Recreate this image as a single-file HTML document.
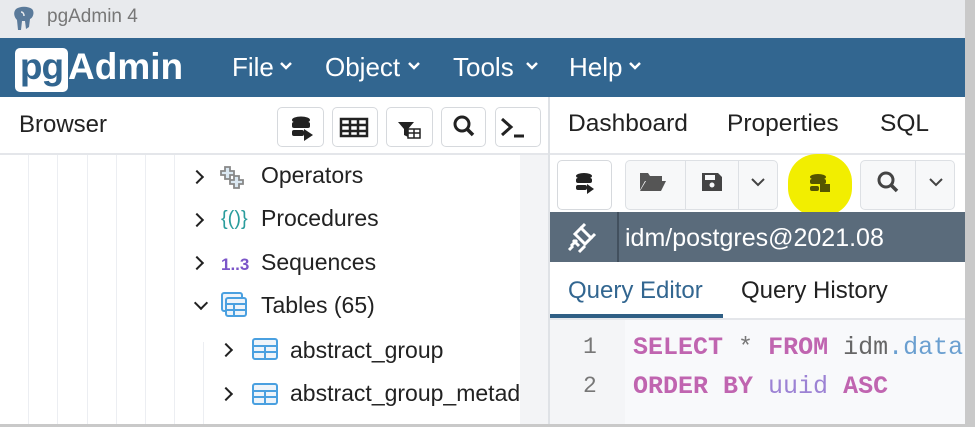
<!DOCTYPE html>
<html><head><style>
*{box-sizing:border-box;margin:0;padding:0}
body{width:975px;height:427px;overflow:hidden;position:relative;background:#fff;font-family:"Liberation Sans",sans-serif;color:#222}
.a{position:absolute}
.btn{position:absolute;border:1px solid #d6d9dd;border-radius:5px;background:#fff}
.tb{position:absolute;border:1px solid #dde0e4;border-radius:5px;background:#f7f8f9}
.vl{position:absolute;top:155px;width:1px;height:270px;background:#eceef2}
.chev{position:absolute;width:10px;height:10px;border-right:2.5px solid #222;border-bottom:2.5px solid #222}
.t{position:absolute;font-size:23px}
</style></head><body>
<div class="a" style="left:0;top:0;width:975px;height:38px;background:#e8eaed"></div>
<svg class="a" style="left:12px;top:6px" width="24" height="26" viewBox="0 0 24 26"><path d="M4 3c4-3 12-3 16 0 3 3 1 9-2 10l-1 8-3 2-1-8-3 0-1 9-3 0-1-10C2 11 1 6 4 3z" fill="#5a7a9a"/><path d="M9 6c2 0 3 2 3 4" stroke="#e8eaed" stroke-width="1.5" fill="none"/></svg>
<div class="a" style="left:47px;top:6px;font-size:19px;color:#777">pgAdmin 4</div>
<div class="a" style="left:0;top:38px;width:965px;height:59px;background:#326690"></div>
<div class="a" style="left:965px;top:0;width:10px;height:427px;background:#c9c9c9"></div>
<div class="a" style="left:15px;top:48px;width:53px;height:44px;background:#fff;border-radius:5px"></div>
<div class="a" style="left:14px;top:46px;font-size:37px;font-weight:bold;color:#326690;letter-spacing:-1px;width:55px;text-align:center">pg</div>
<div class="a" style="left:68px;top:46px;font-size:37px;font-weight:bold;color:#fff">Admin</div>
<div class="a" style="left:232px;top:52px;font-size:26px;color:#fff">File</div>
<div class="a" style="left:325px;top:52px;font-size:26px;color:#fff">Object</div>
<div class="a" style="left:453px;top:52px;font-size:26px;color:#fff">Tools</div>
<div class="a" style="left:569px;top:52px;font-size:26px;color:#fff">Help</div>
<svg class="a" style="left:0;top:38px" width="965" height="59"><g stroke="#fff" stroke-width="2.5" fill="none"><path d="M281 25l5 5 5-5"/><path d="M409 25l5 5 5-5"/><path d="M527 25l5 5 5-5"/><path d="M630 25l5 5 5-5"/></g></svg>
<!-- Browser header -->
<div class="t" style="left:19px;top:111px;font-size:24px">Browser</div>
<div class="a" style="left:0;top:153px;width:550px;height:2px;background:#e4e6ea"></div>
<div class="btn" style="left:277px;top:107px;width:47px;height:40px"></div>
<div class="btn" style="left:332px;top:107px;width:46px;height:40px"></div>
<div class="btn" style="left:386px;top:107px;width:47px;height:40px"></div>
<div class="btn" style="left:441px;top:107px;width:45px;height:40px"></div>
<div class="btn" style="left:495px;top:107px;width:46px;height:40px"></div>
<svg class="a" style="left:277px;top:107px" width="270" height="40">
<g fill="#222"><ellipse cx="24" cy="13" rx="9" ry="3.5"/><rect x="15" y="15" width="18" height="6" rx="2"/><rect x="15" y="23" width="12" height="6" rx="2"/><path d="M27 22l9 6-9 6z"/></g>
<g stroke="#222" stroke-width="2.5" fill="none"><rect x="64" y="12" width="26" height="17"/><path d="M64 18h26M64 24h26M73 12v17M81 12v17"/></g>
<path d="M121 15h16l-6 7v8l-4-2v-6z" fill="#222"/><g stroke="#222" stroke-width="1.5" fill="none"><rect x="131" y="22" width="12" height="9"/><path d="M131 26h12M137 22v9"/></g>
<circle cx="185" cy="17" r="7" stroke="#222" stroke-width="3" fill="none"/><path d="M190 22l6 6" stroke="#222" stroke-width="3.5"/>
<path d="M225 12l9 8-9 8" stroke="#222" stroke-width="3" fill="none"/><path d="M237 29h10" stroke="#222" stroke-width="3"/>
</svg>
<!-- tree -->
<div class="vl" style="left:28px"></div><div class="vl" style="left:57px"></div><div class="vl" style="left:87px"></div><div class="vl" style="left:116px"></div><div class="vl" style="left:145px"></div><div class="vl" style="left:174px"></div><div class="vl" style="left:203px;top:342px;height:85px"></div>
<div class="a" style="left:520px;top:155px;width:28px;height:272px;background:#f3f4f6"></div>
<div class="a" style="left:548px;top:97px;width:2px;height:330px;background:#dfe2e6"></div>
<div class="chev" style="left:192px;top:172px;transform:rotate(-45deg)"></div>
<div class="chev" style="left:192px;top:215px;transform:rotate(-45deg)"></div>
<div class="chev" style="left:192px;top:258px;transform:rotate(-45deg)"></div>
<div class="chev" style="left:196px;top:298px;transform:rotate(45deg)"></div>
<div class="chev" style="left:221px;top:345px;transform:rotate(-45deg)"></div>
<div class="chev" style="left:221px;top:389px;transform:rotate(-45deg)"></div>
<svg class="a" style="left:220px;top:163px" width="70" height="260">
<g stroke="#888" stroke-width="1.8" fill="#dbe8f2"><path d="M5 4h5v4h4v4h-4v4H5v-4H1V8h4z"/><path d="M14 13h5v4h4v4h-4v4h-5v-4h-4v-4h4z"/></g>
<text x="1" y="62" font-size="20" fill="#2a9d9d" font-family="Liberation Sans">{()}</text>
<text x="1" y="107" font-size="17" font-weight="bold" fill="#7b55c8" font-family="Liberation Sans">1..3</text>
<g stroke="#4aa0e0" stroke-width="2" fill="#eef4fa"><rect x="2" y="130" width="20" height="18" rx="2"/><rect x="6" y="135" width="20" height="18" rx="2"/><path d="M6 141h20M6 147h20M14 141v12"/></g>
<g stroke="#4aa0e0" stroke-width="2" fill="#eef4fa"><rect x="33" y="176" width="24" height="20" rx="2"/><path d="M33 183h24M33 189h24M45 183v13"/><rect x="33" y="221" width="24" height="20" rx="2"/><path d="M33 228h24M33 234h24M45 228v13"/></g>
</svg>
<div class="t" style="left:261px;top:162px">Operators</div>
<div class="t" style="left:261px;top:205px">Procedures</div>
<div class="t" style="left:261px;top:249px">Sequences</div>
<div class="t" style="left:261px;top:292px">Tables (65)</div>
<div class="t" style="left:290px;top:337px">abstract_group</div>
<div class="t" style="left:290px;top:380px;width:230px;overflow:hidden;white-space:nowrap">abstract_group_metadata</div>
<!-- right panel -->
<div class="t" style="left:568px;top:110px;font-size:24.5px">Dashboard</div>
<div class="t" style="left:727px;top:110px;font-size:24.5px">Properties</div>
<div class="t" style="left:880px;top:110px;font-size:24.5px">SQL</div>
<div class="a" style="left:550px;top:153px;width:415px;height:2px;background:#e4e6ea"></div>
<div class="btn" style="left:557px;top:160px;width:55px;height:50px"></div>
<div class="tb" style="left:625px;top:160px;width:153px;height:50px"></div>
<div class="a" style="left:685px;top:160px;width:1px;height:50px;background:#dde0e4"></div>
<div class="a" style="left:738px;top:160px;width:1px;height:50px;background:#dde0e4"></div>
<div class="tb" style="left:860px;top:160px;width:95px;height:50px"></div>
<div class="a" style="left:915px;top:160px;width:1px;height:50px;background:#dde0e4"></div>
<div class="a" style="left:788px;top:154px;width:64px;height:62px;background:#f2ee00;border-radius:45%"></div>
<svg class="a" style="left:550px;top:155px" width="415" height="57">
<g fill="#222"><ellipse cx="34" cy="21" rx="8" ry="3"/><rect x="26" y="23" width="16" height="5" rx="2"/><rect x="26" y="30" width="11" height="5" rx="2"/><path d="M37 29l7 5-7 5z"/></g>
<path d="M90 18h8l2 3h12v5H95l-5 9z" fill="#555"/><path d="M96 26h20l-5 10H90z" fill="#555"/>
<path d="M152 18h16l4 4v14h-20z" fill="#444"/><rect x="155" y="20" width="10" height="5" fill="#f7f8f9"/><circle cx="162" cy="30" r="2.5" fill="#f7f8f9"/>
<path d="M202 24l6 6 6-6" stroke="#444" stroke-width="2" fill="none"/>
<g fill="#555500"><ellipse cx="268" cy="22" rx="8" ry="3"/><rect x="260" y="24" width="16" height="5" rx="2"/><rect x="260" y="31" width="9" height="5" rx="2"/><rect x="270" y="29" width="10" height="8"/></g>
<circle cx="336" cy="25" r="7" stroke="#444" stroke-width="3" fill="none"/><path d="M341 30l6 6" stroke="#444" stroke-width="3.5"/>
<path d="M380 24l6 6 6-6" stroke="#444" stroke-width="2" fill="none"/>
</svg>
<div class="a" style="left:550px;top:212px;width:415px;height:50px;background:#5a6b7b"></div>
<div class="a" style="left:617px;top:212px;width:2px;height:50px;background:#42505e"></div>
<svg class="a" style="left:565px;top:222px" width="36" height="32"><g stroke="#fff" stroke-width="3" fill="none"><path d="M10 12l6-6 10 10-6 6z"/><path d="M16 6l4-4M26 16l4-4M6 24l6-6M14 30l6-6"/><path d="M8 18l6 6"/><path d="M4 28l4-4"/></g></svg>
<div class="a" style="left:625px;top:224px;font-size:25px;color:#fff">idm/postgres@2021.08</div>
<div class="t" style="left:568px;top:277px;font-size:24px;color:#326690">Query Editor</div>
<div class="t" style="left:741px;top:277px;font-size:24px">Query History</div>
<div class="a" style="left:550px;top:314px;width:173px;height:4px;background:#2f5f85"></div>
<div class="a" style="left:550px;top:318px;width:415px;height:2px;background:#e4e6ea"></div>
<div class="a" style="left:550px;top:320px;width:415px;height:105px;background:#f8f9fb"></div>
<div class="a" style="left:550px;top:320px;width:75px;height:105px;background:#f4f5f7"></div>
<div class="a" style="left:0;top:424px;width:965px;height:3px;background:#c9c9c9"></div>
<div class="a" style="left:583px;top:328px;font:23px 'Liberation Mono',monospace;color:#777;line-height:39px">1<br>2</div>
<div class="a" style="left:633px;top:328px;font:25px 'Liberation Mono',monospace;line-height:39px;white-space:nowrap;width:332px;overflow:hidden"><span style="color:#c065b0;font-weight:bold">SELECT</span> <span style="color:#777">*</span> <span style="color:#c065b0;font-weight:bold">FROM</span> <span style="color:#666">idm</span><span style="color:#6a9fd0">.data</span><br><span style="color:#c065b0;font-weight:bold">ORDER BY</span> <span style="color:#9c82d4">uuid</span> <span style="color:#c065b0;font-weight:bold">ASC</span></div>
</body></html>
